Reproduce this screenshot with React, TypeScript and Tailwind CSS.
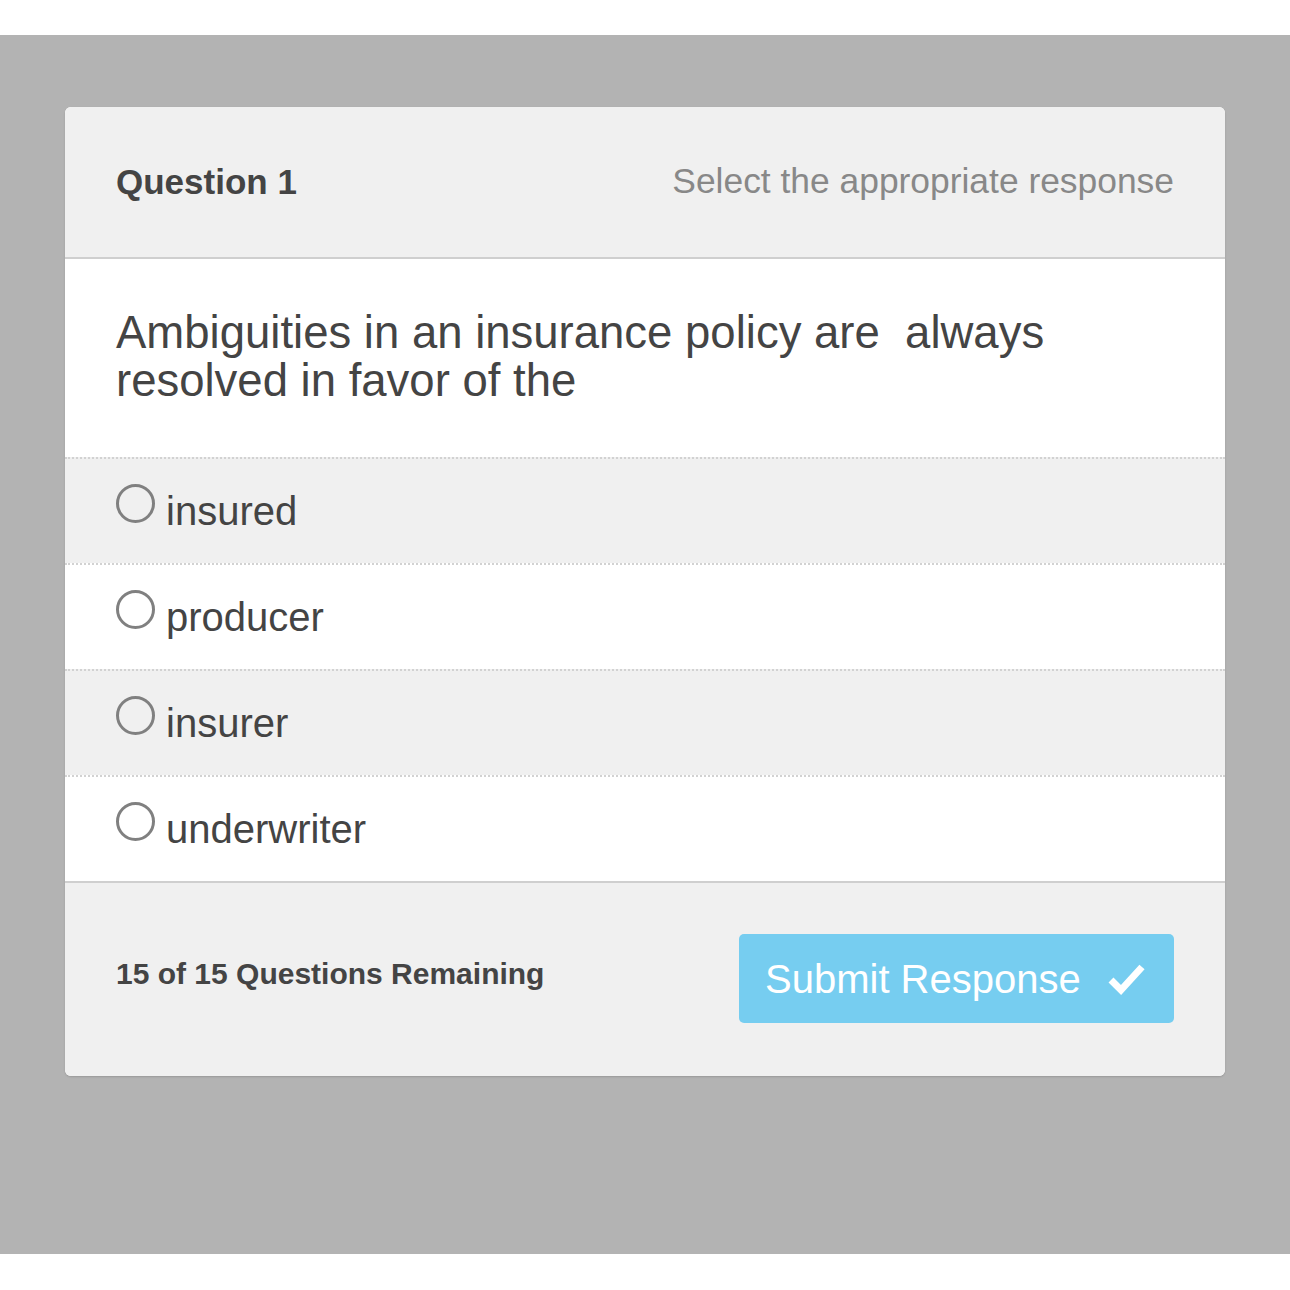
import React from "react";

const options = ["insured", "producer", "insurer", "underwriter"];

export default function App() {
  return (
    <div className="w-full bg-white pt-[35px] pb-[36px]" style={{ fontFamily: '"Liberation Sans", Arial, sans-serif' }}>
      <div className="bg-[#b3b3b3] px-[65px] pt-[72px] pb-[178px]">
        <div className="overflow-hidden rounded-[6px] bg-white shadow-[0_1px_2px_rgba(0,0,0,0.15)]">
          <div className="flex h-[152px] items-center justify-between bg-[#f0f0f0] px-[51px] border-b-2 border-[#cfcfcf]">
            <div className="text-[35px] font-bold text-[#444]">Question 1</div>
            <div className="text-[35.4px] text-[#888]">Select the appropriate response</div>
          </div>
          <div className="bg-white px-[51px] pt-[50px] pb-[52px] text-[45.5px] leading-[48px] text-[#444]">
            Ambiguities in an insurance policy are{"\u00a0"} always resolved in favor of the
          </div>
          {options.map((o, i) => (
            <div
              key={o}
              className={`flex items-start border-t-2 border-dotted border-[#d2d2d2] px-[51px] pt-[25px] pb-[28px] ${i % 2 === 0 ? "bg-[#f0f0f0]" : "bg-white"}`}
            >
              <div className="h-[39px] w-[39px] shrink-0 rounded-full border-[3px] border-[#808080]" />
              <div className="ml-[11px] mt-[3px] text-[40px] leading-[48px] text-[#444]">{o}</div>
            </div>
          ))}
          <div className="flex h-[195px] items-center justify-between border-t-2 border-[#cfcfcf] bg-[#f0f0f0] px-[51px]">
            <div className="mt-[-12px] text-[30px] font-bold text-[#444]">15 of 15 Questions Remaining</div>
            <button className="mt-[-2px] flex h-[89px] w-[435px] items-center rounded-[5px] bg-[#76cdf0] pl-[26px] pr-[27px] text-white">
              <span className="text-[40px] leading-none">Submit Response</span>
              <svg className="ml-auto" width="40" height="34" viewBox="0 0 40 34">
                <path d="M4 18 L14 28 L35 5" fill="none" stroke="white" strokeWidth="7" strokeLinejoin="miter" />
              </svg>
            </button>
          </div>
        </div>
      </div>
    </div>
  );
}
